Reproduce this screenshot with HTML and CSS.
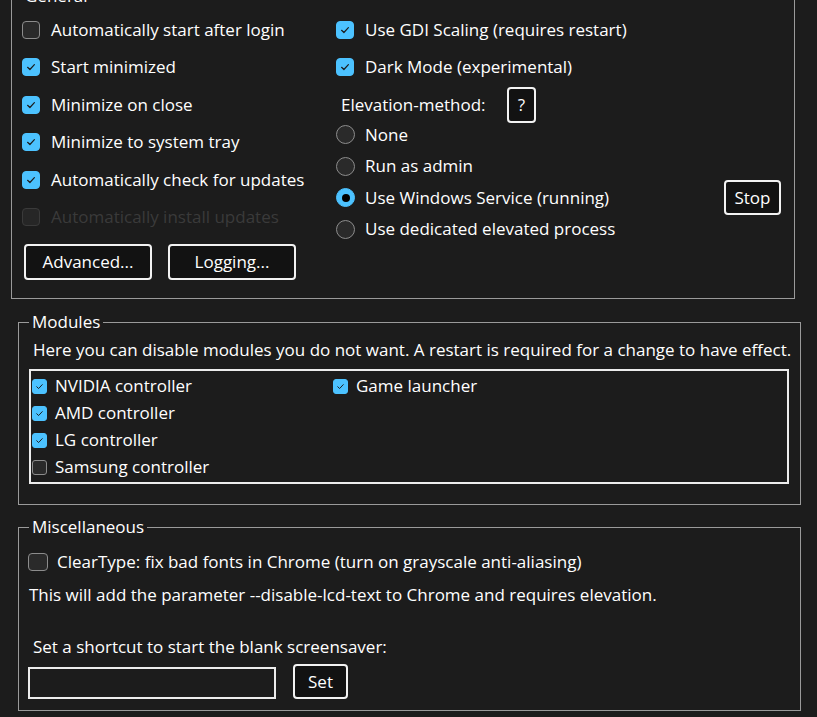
FILE: index.html
```html
<!DOCTYPE html>
<html>
<head>
<meta charset="utf-8">
<link rel="stylesheet" href="styles.css">
</head>
<body>
<fieldset class="group group-general">
  <legend>General</legend>
  <div class="general-cols">
    <div class="col-left">
      <label class="opt"><span class="cb"></span><span>Automatically start after login</span></label>
      <label class="opt"><span class="cb on"><svg viewBox="0 0 16 16"><path d="M4.6 8.3 L6.9 10.5 L11.4 5.7"/></svg></span><span>Start minimized</span></label>
      <label class="opt"><span class="cb on"><svg viewBox="0 0 16 16"><path d="M4.6 8.3 L6.9 10.5 L11.4 5.7"/></svg></span><span>Minimize on close</span></label>
      <label class="opt"><span class="cb on"><svg viewBox="0 0 16 16"><path d="M4.6 8.3 L6.9 10.5 L11.4 5.7"/></svg></span><span>Minimize to system tray</span></label>
      <label class="opt"><span class="cb on"><svg viewBox="0 0 16 16"><path d="M4.6 8.3 L6.9 10.5 L11.4 5.7"/></svg></span><span>Automatically check for updates</span></label>
      <label class="opt disabled"><span class="cb"></span><span>Automatically install updates</span></label>
      <div class="btn-row">
        <button class="btn btn-wide">Advanced...</button>
        <button class="btn btn-wide">Logging...</button>
      </div>
    </div>
    <div class="col-right">
      <label class="opt"><span class="cb on"><svg viewBox="0 0 16 16"><path d="M4.6 8.3 L6.9 10.5 L11.4 5.7"/></svg></span><span>Use GDI Scaling (requires restart)</span></label>
      <label class="opt"><span class="cb on"><svg viewBox="0 0 16 16"><path d="M4.6 8.3 L6.9 10.5 L11.4 5.7"/></svg></span><span>Dark Mode (experimental)</span></label>
      <div class="elev-row">
        <span class="elev-label">Elevation-method:</span>
        <button class="btn btn-help">?</button>
      </div>
      <div class="radios">
        <label class="radio-opt"><span class="rb"></span><span>None</span></label>
        <label class="radio-opt"><span class="rb"></span><span>Run as admin</span></label>
        <div class="radio-opt radio-split">
          <label class="radio-inner"><span class="rb on"></span><span>Use Windows Service (running)</span></label>
          <button class="btn btn-stop">Stop</button>
        </div>
        <label class="radio-opt"><span class="rb"></span><span>Use dedicated elevated process</span></label>
      </div>
    </div>
  </div>
</fieldset>

<fieldset class="group group-modules">
  <legend>Modules</legend>
  <div class="desc">Here you can disable modules you do not want. A restart is required for a change to have effect.</div>
  <div class="module-list">
    <label class="mod"><span class="cb cb-sm on"><svg viewBox="0 0 16 16"><path d="M4.6 8.3 L6.9 10.5 L11.4 5.7"/></svg></span><span>NVIDIA controller</span></label>
    <label class="mod"><span class="cb cb-sm on"><svg viewBox="0 0 16 16"><path d="M4.6 8.3 L6.9 10.5 L11.4 5.7"/></svg></span><span>AMD controller</span></label>
    <label class="mod"><span class="cb cb-sm on"><svg viewBox="0 0 16 16"><path d="M4.6 8.3 L6.9 10.5 L11.4 5.7"/></svg></span><span>LG controller</span></label>
    <label class="mod"><span class="cb cb-sm"></span><span>Samsung controller</span></label>
    <label class="mod"><span class="cb cb-sm on"><svg viewBox="0 0 16 16"><path d="M4.6 8.3 L6.9 10.5 L11.4 5.7"/></svg></span><span>Game launcher</span></label>
  </div>
</fieldset>

<fieldset class="group group-misc">
  <legend>Miscellaneous</legend>
  <label class="opt opt-misc"><span class="cb cb-misc"></span><span>ClearType: fix bad fonts in Chrome (turn on grayscale anti-aliasing)</span></label>
  <div class="note">This will add the parameter --disable-lcd-text to Chrome and requires elevation.</div>
  <div class="shortcut-label">Set a shortcut to start the blank screensaver:</div>
  <div class="shortcut-row">
    <input class="shortcut-input" type="text">
    <button class="btn btn-set">Set</button>
  </div>
</fieldset>
</body>
</html>
```

FILE: styles.css
```css
* { box-sizing: border-box; }

html, body {
  margin: 0;
  padding: 0;
  background: #1c1c1c;
}

body {
  width: 817px;
  height: 717px;
  overflow: hidden;
  font-family: "Open Sans", "Noto Sans", sans-serif;
  font-size: 17px;
  line-height: 20px;
  color: #ffffff;
}

.group {
  border: 1px solid #9a9a9a;
  margin: 0;
  min-inline-size: 0;
}

.group legend {
  padding: 0 3px;
  height: 20px;
  line-height: 20px;
  font-size: 17px;
}

.group-general {
  margin: -14px 0 0 11px;
  width: 784px;
  padding: 5px 13px 18px 10px;
}

.general-cols {
  display: flex;
}

.col-left {
  width: 314px;
  display: flex;
  flex-direction: column;
}

.col-right {
  width: 445px;
  display: flex;
  flex-direction: column;
}

.opt {
  display: flex;
  align-items: center;
  gap: 11px;
  height: 37.5px;
  white-space: nowrap;
}

.opt.disabled { color: #3a3a3a; }

.cb {
  flex: none;
  width: 18px;
  height: 18px;
  border: 1.5px solid #8c8c8c;
  border-radius: 4px;
  background: #2a2a2a;
  display: flex;
  align-items: center;
  justify-content: center;
}

.cb.on {
  border-color: #4cc2ff;
  background: #4cc2ff;
}

.cb svg {
  width: 16px;
  height: 16px;
  fill: none;
  stroke: #1c1c1c;
  stroke-width: 1.2;
  stroke-linecap: round;
  stroke-linejoin: round;
}

.opt.disabled .cb {
  border-color: #3a3a3a;
  background: #262626;
}

.btn {
  font-family: inherit;
  font-size: 17px;
  color: #ffffff;
  background: #121212;
  border: 2px solid #f2f2f2;
  border-radius: 4px;
  padding: 0;
  line-height: 20px;
}

.btn-row {
  display: flex;
  gap: 16px;
  margin-top: 8px;
  padding-left: 2px;
}

.btn-wide {
  width: 128px;
  height: 36px;
}

.elev-row {
  display: flex;
  align-items: center;
  height: 37.5px;
  padding-left: 5px;
}

.elev-label {
  width: 166px;
}

.btn-help {
  width: 29px;
  height: 36px;
}

.radios {
  margin-top: -4.5px;
  display: flex;
  flex-direction: column;
}

.radio-opt {
  display: flex;
  align-items: center;
  gap: 10px;
  height: 31.5px;
  white-space: nowrap;
}

.radio-split {
  justify-content: space-between;
}

.radio-inner {
  display: flex;
  align-items: center;
  gap: 10px;
}

.rb {
  flex: none;
  width: 19px;
  height: 19px;
  border: 1.5px solid #8c8c8c;
  border-radius: 50%;
  background: #2a2a2a;
  display: flex;
  align-items: center;
  justify-content: center;
}

.rb.on {
  border-color: #4cc2ff;
  background: #4cc2ff;
}

.rb.on::after {
  content: "";
  width: 8px;
  height: 8px;
  border-radius: 50%;
  background: #000000;
}

.btn-stop {
  width: 57px;
  height: 35px;
}

.group-modules {
  margin: 13px 0 0 18px;
  width: 783px;
  padding: 8px 11px 20px 10px;
}

.desc {
  white-space: nowrap;
  padding-left: 4px;
  margin-bottom: 9px;
}

.module-list {
  height: 115px;
  border: 2px solid #ececec;
  padding: 1.5px 1px;
  display: grid;
  grid-template-rows: repeat(4, 27px);
  grid-template-columns: 301px 1fr;
  grid-auto-flow: column;
}

.mod {
  display: flex;
  align-items: center;
  gap: 8px;
  white-space: nowrap;
}

.cb.cb-sm {
  width: 15px;
  height: 15px;
  border-radius: 3px;
  border-width: 1px;
}

.cb.cb-sm svg {
  width: 13px;
  height: 13px;
}

.group-misc {
  margin: 12px 0 0 18px;
  width: 783px;
  padding: 10px 11px 11px 10px;
}

.opt-misc {
  height: 30px;
  gap: 9px;
  margin-left: -1px;
}

.cb.cb-misc {
  width: 20px;
  height: 18px;
}

.note {
  margin-top: 8px;
  white-space: nowrap;
}

.shortcut-label {
  margin-top: 32px;
  margin-left: 4px;
  white-space: nowrap;
}

.shortcut-row {
  margin-top: 7px;
  display: flex;
  align-items: flex-end;
  gap: 17px;
  height: 35px;
}

.shortcut-input {
  width: 248px;
  height: 32px;
  margin: 0 0 0 -1px;
  border: 2px solid #ececec;
  background: #1c1c1c;
  color: #ffffff;
  font-family: inherit;
  font-size: 17px;
  padding: 0 4px;
  outline: none;
}

.btn-set {
  width: 55px;
  height: 35px;
}
```
